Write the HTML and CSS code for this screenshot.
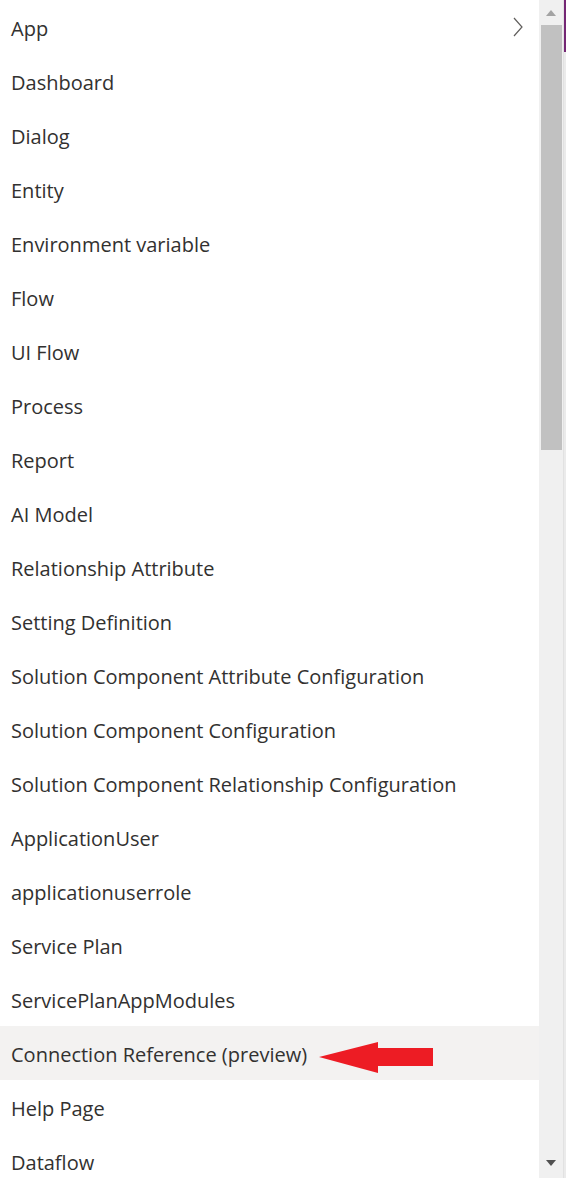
FILE: index.html
```html
<!DOCTYPE html>
<html>
<head>
<meta charset="utf-8">
<link rel="stylesheet" href="styles.css">
</head>
<body>
<div class="frame">
  <div class="menu">
    <div class="item has-sub">App
      <svg class="chev" width="10" height="20" viewBox="0 0 10 20"><path d="M1 1 L9 10 L1 19" fill="none" stroke="#605e5c" stroke-width="1.2"/></svg>
    </div>
    <div class="item">Dashboard</div>
    <div class="item">Dialog</div>
    <div class="item">Entity</div>
    <div class="item">Environment variable</div>
    <div class="item">Flow</div>
    <div class="item">UI Flow</div>
    <div class="item">Process</div>
    <div class="item">Report</div>
    <div class="item">AI Model</div>
    <div class="item">Relationship Attribute</div>
    <div class="item">Setting Definition</div>
    <div class="item">Solution Component Attribute Configuration</div>
    <div class="item">Solution Component Configuration</div>
    <div class="item">Solution Component Relationship Configuration</div>
    <div class="item">ApplicationUser</div>
    <div class="item">applicationuserrole</div>
    <div class="item">Service Plan</div>
    <div class="item">ServicePlanAppModules</div>
    <div class="item hover">Connection Reference (preview)
      <svg class="arrow" width="116" height="32" viewBox="0 0 116 32"><polygon points="0,15 59,0 59,6 114,6 114,24 59,24 59,31" fill="#ed1c24"/></svg>
    </div>
    <div class="item">Help Page</div>
    <div class="item">Dataflow</div>
  </div>
  <div class="scrollbar">
    <div class="sb-btn up"><span class="tri-up"></span></div>
    <div class="thumb"></div>
    <div class="track"></div>
    <div class="sb-btn down"><span class="tri-down"></span></div>
  </div>
  <div class="edge">
    <div class="edge-top"></div>
  </div>
</div>
</body>
</html>
```
FILE: styles.css
```css
html, body {
  margin: 0;
  padding: 0;
  background: #ffffff;
}
.frame {
  display: flex;
  height: 1178px;
  overflow: hidden;
}
.menu {
  width: 539px;
  flex: none;
  height: 1178px;
  overflow: hidden;
  background: #ffffff;
}
.item {
  position: relative;
  box-sizing: border-box;
  height: 54px;
  display: flex;
  align-items: center;
  padding-left: 11px;
  padding-top: 2px;
  font-family: "Open Sans", "Noto Sans", sans-serif;
  font-size: 20px;
  color: #323130;
  white-space: nowrap;
}
.item.hover {
  background: #f3f2f1;
}
.chev {
  position: absolute;
  left: 513px;
  top: 17px;
}
.arrow {
  position: absolute;
  left: 319px;
  top: 16px;
}
.scrollbar {
  width: 24px;
  flex: none;
  background: #f0f0f0;
  display: flex;
  flex-direction: column;
  height: 1178px;
}
.sb-btn {
  height: 25px;
  display: flex;
  justify-content: center;
  flex: none;
}
.sb-btn.up {
  align-items: flex-start;
  padding-top: 10px;
  height: 15px;
}
.sb-btn.down {
  align-items: flex-start;
  padding-top: 7px;
  height: 18px;
}
.tri-up {
  width: 0;
  height: 0;
  border-left: 5.5px solid transparent;
  border-right: 5.5px solid transparent;
  border-bottom: 6px solid #a3a3a3;
}
.tri-down {
  width: 0;
  height: 0;
  border-left: 5.5px solid transparent;
  border-right: 5.5px solid transparent;
  border-top: 6px solid #505050;
}
.thumb {
  height: 425px;
  margin: 0 1px 0 2px;
  background: #c1c1c1;
  flex: none;
}
.track {
  flex: 1;
}
.edge {
  width: 3px;
  flex: none;
  background: #ebebeb;
  border-left: 1px solid #e2e2e2;
}
.edge-top {
  height: 52px;
  background: #742774;
}
```
